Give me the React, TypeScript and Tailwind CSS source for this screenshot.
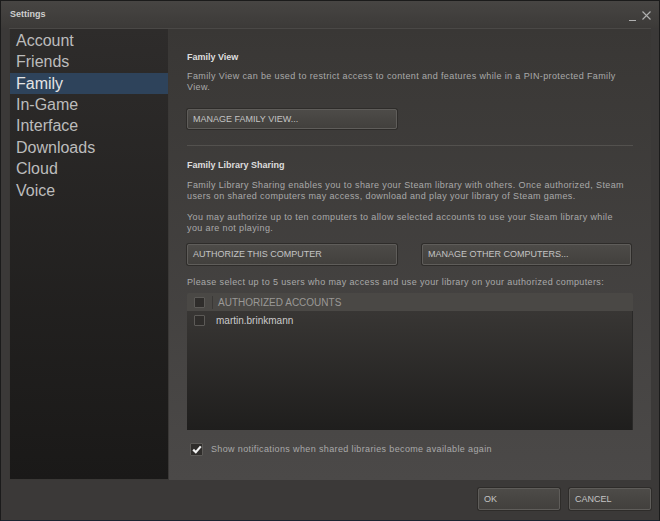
import React from 'react';

const NAV = ['Account', 'Friends', 'Family', 'In-Game', 'Interface', 'Downloads', 'Cloud', 'Voice'];

function Btn({ children, className = '' }: { children: React.ReactNode; className?: string }) {
  return (
    <button
      type="button"
      className={`flex items-center rounded-[2px] border border-[#5f5d5a] bg-gradient-to-b from-[#4d4b48] to-[#42403d] pl-[5px] text-left text-[9px] uppercase leading-none text-[#c4c4c4] shadow-[0_0_0_1px_#2e2c2a] ${className}`}
    >
      {children}
    </button>
  );
}

function Box({ checked = false, size = 'h-[11px] w-[11px]' }: { checked?: boolean; size?: string }) {
  return (
    <span className={`flex shrink-0 items-center justify-center rounded-[1px] border border-[#5c5a57] bg-[#2f2d2b] ${size}`}>
      {checked && (
        <svg width="10" height="9" viewBox="0 0 10 9">
          <path d="M1.2 4.6 L3.8 7.2 L8.8 1.4" fill="none" stroke="#f2f2f2" strokeWidth="2.2" />
        </svg>
      )}
    </span>
  );
}

export default function App() {
  return (
    <div
      className="flex h-[521px] w-[660px] flex-col border border-[#1b1b1b] border-b-[#1c2431] bg-[#3b3938] text-[#a9a9a9]"
      style={{ fontFamily: '"Liberation Sans", Arial, sans-serif' }}
    >
      {/* title bar */}
      <div className="flex h-[27px] shrink-0 items-center justify-between bg-gradient-to-b from-[#474543] to-[#3c3a38] pl-[9px] pr-[8px]">
        <span className="text-[9px] font-bold text-[#cfcfcf]">Settings</span>
        <div className="flex items-center gap-[6px] pt-[2px]">
          <svg width="7" height="10" viewBox="0 0 7 10">
            <path d="M0 9.5 H7" stroke="#b0b0b0" strokeWidth="1" />
          </svg>
          <svg width="9" height="9" viewBox="0 0 9 9">
            <path d="M0.5 0.5 L8.5 8.5 M8.5 0.5 L0.5 8.5" stroke="#b0b0b0" strokeWidth="1.1" />
          </svg>
        </div>
      </div>
      <div className="mx-[8px] h-px shrink-0 bg-[#4a4846]" />

      {/* main */}
      <div className="flex h-[451px] shrink-0 px-[8px]">
        <nav className="flex w-[160px] shrink-0 flex-col border-x border-b border-[#3a3836] bg-gradient-to-b from-[#2e2c2b] to-[#1a1918] pt-[1px]">
          {NAV.map((n) => (
            <div
              key={n}
              className={`flex h-[21.45px] items-center pl-[6px] text-[16px] leading-none ${
                n === 'Family' ? 'bg-[#2e435b] text-[#e4e4e4]' : 'text-[#bcbcbc]'
              }`}
            >
              {n}
            </div>
          ))}
        </nav>

        <section className="flex w-[482px] shrink-0 flex-col bg-gradient-to-b from-[#393735] to-[#4b4948] px-[18px] pt-[23px] text-[9px] leading-[11px]">
          <h3 className="font-bold text-[#dedede]">Family View</h3>
          <p className="mt-[8px] tracking-[0.38px]">
            Family View can be used to restrict access to content and features while in a PIN-protected Family View.
          </p>
          <Btn className="mt-[16px] h-[20px] w-[210px]">Manage Family View...</Btn>
          <div className="mt-[16px] h-px bg-[#53514e]" />

          <h3 className="mt-[14px] font-bold text-[#dedede]">Family Library Sharing</h3>
          <p className="mt-[9px] tracking-[0.38px]">
            Family Library Sharing enables you to share your Steam library with others. Once authorized, Steam users on
            shared computers may access, download and play your library of Steam games.
          </p>
          <p className="mt-[10px] pr-[16px] tracking-[0.38px]">
            You may authorize up to ten computers to allow selected accounts to use your Steam library while you are not
            playing.
          </p>
          <div className="mt-[10px] flex gap-[25px]">
            <Btn className="h-[21px] w-[210px]">Authorize this computer</Btn>
            <Btn className="h-[21px] w-[209px]">Manage other computers...</Btn>
          </div>
          <p className="mt-[12px] whitespace-nowrap tracking-[0.37px]">
            Please select up to 5 users who may access and use your library on your authorized computers:
          </p>

          <div className="mt-[5px] flex w-[446px] flex-col">
            <div className="flex h-[18px] items-center rounded-t-[2px] bg-[#4a4845] pl-[7px]">
              <Box />
              <span className="ml-[7px] h-[13px] w-px bg-[#3a3836]" />
              <span className="ml-[5px] text-[10px] uppercase text-[#9a9896]">Authorized Accounts</span>
            </div>
            <div className="h-[119px] bg-gradient-to-b from-[#383634] to-[#1f1e1d] shadow-[inset_-1px_0_0_#2a2928]">
              <div className="flex h-[18px] items-center pl-[7px]">
                <Box />
                <span className="ml-[11px] text-[10px] text-[#cbcbcb]">martin.brinkmann</span>
              </div>
            </div>
          </div>

          <label className="mt-[13px] flex items-center pl-[3px]">
            <Box checked size="h-[13px] w-[13px]" />
            <span className="ml-[8px] tracking-[0.37px] text-[#a9a9a9]">
              Show notifications when shared libraries become available again
            </span>
          </label>
        </section>
      </div>

      {/* footer */}
      <div className="flex flex-1 justify-end gap-[9px] pr-[8px] pt-[8px]">
        <Btn className="h-[22px] w-[82px]">OK</Btn>
        <Btn className="h-[22px] w-[82px]">Cancel</Btn>
      </div>
    </div>
  );
}
